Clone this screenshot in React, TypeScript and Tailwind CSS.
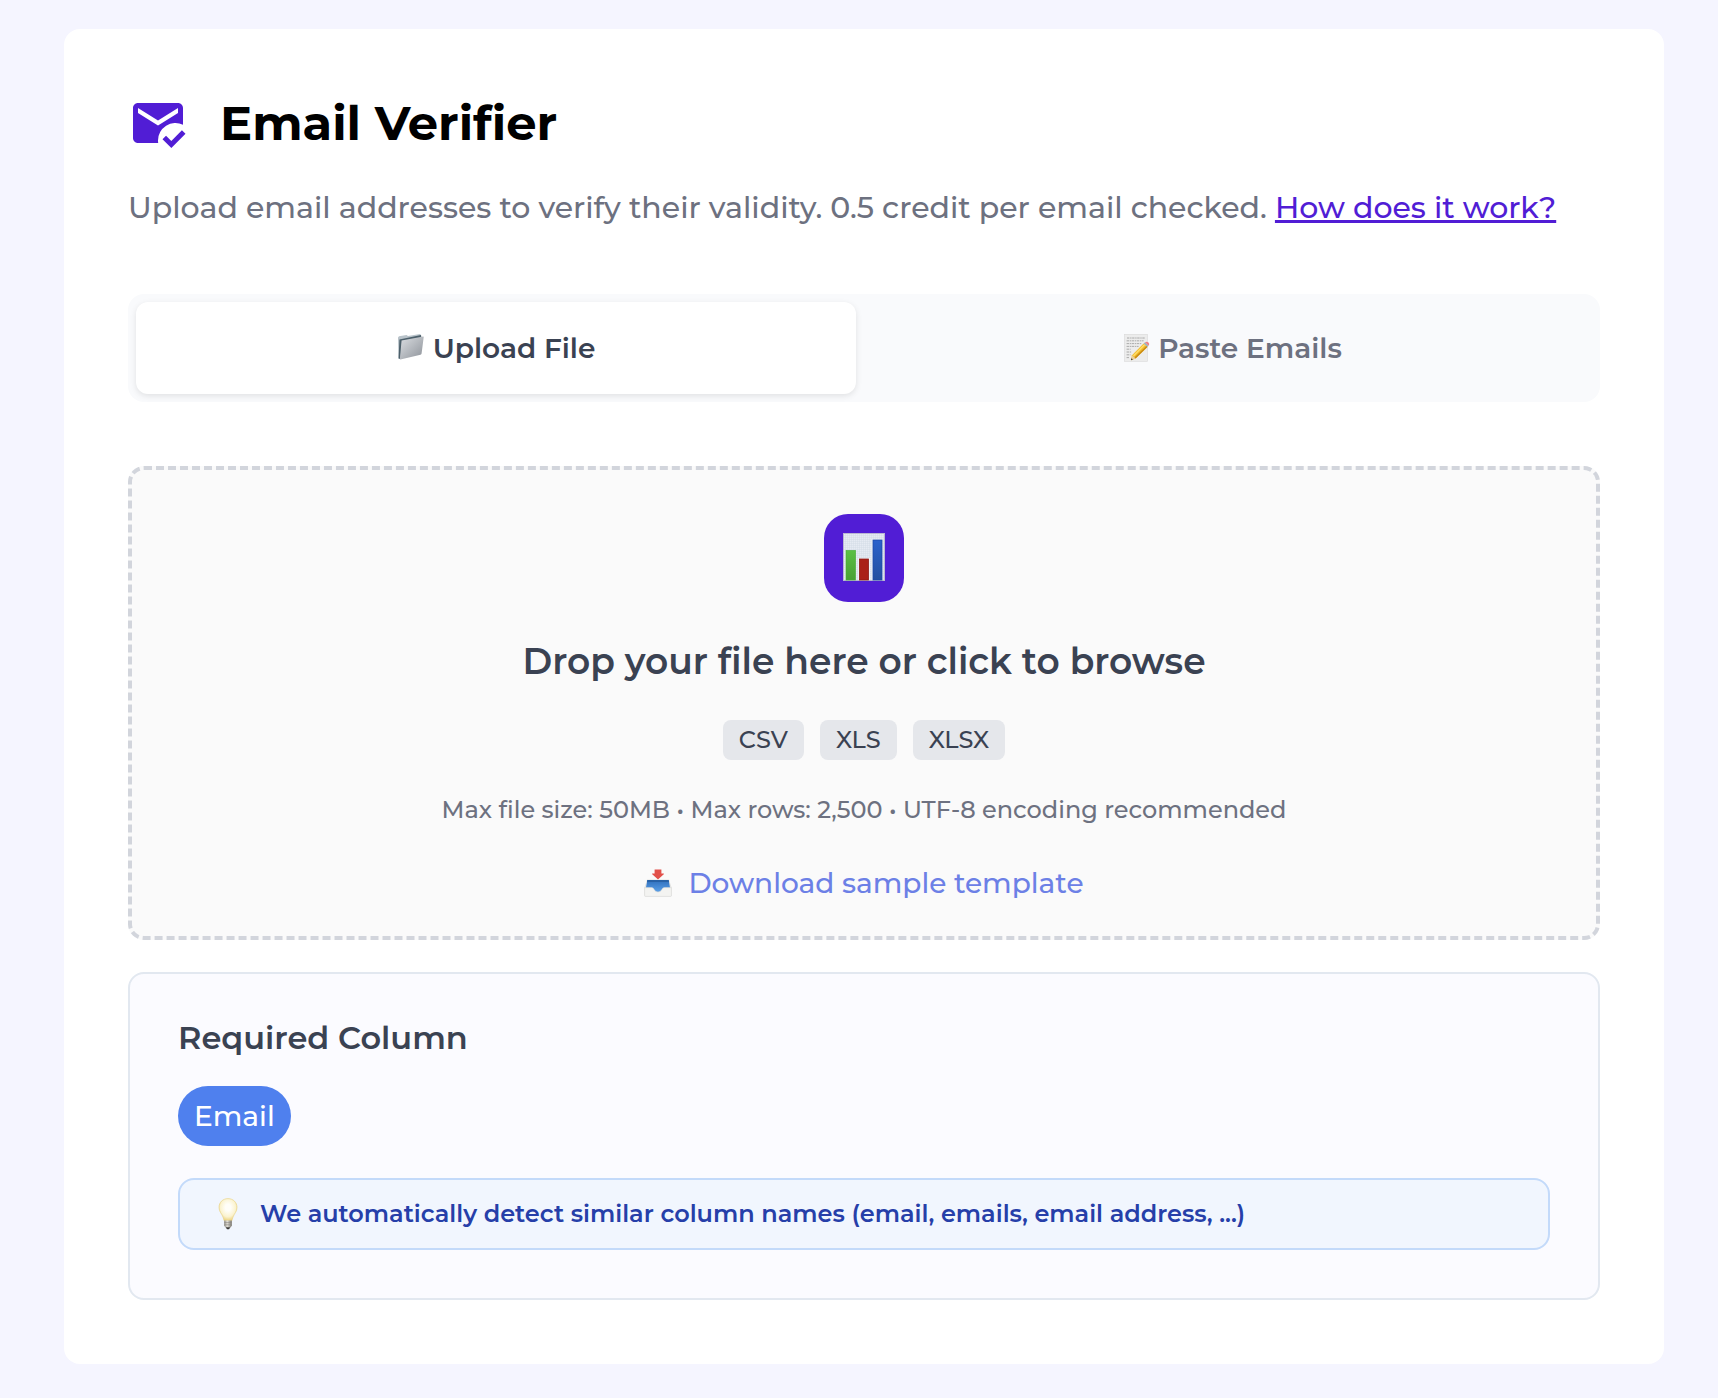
import React, { useState } from 'react';
import { MdMarkEmailRead } from 'react-icons/md';

type Mode = 'upload' | 'paste';

interface IconProps {
  className?: string;
}

const FILE_TYPES = ['CSV', 'XLS', 'XLSX'];

const FolderIcon: React.FC<IconProps> = ({ className }) => (
  <svg viewBox="0 0 28 28" className={className} aria-hidden="true">
    <defs>
      <linearGradient id="folderFront" x1="0" y1="0" x2="1" y2="1">
        <stop offset="0" stopColor="#dcdfe3" />
        <stop offset="1" stopColor="#8d9299" />
      </linearGradient>
    </defs>
    <path d="M1 3.4 L2 2.2 L9.500 1 L11 2 L23 0 L24 1 L24 4 L3.5 25 L1.4 24.6 Z" fill="#b9c3ca" />
    <path d="M2.4 5.6 L24 1 L24.4 3.4 L5 8 L3.4 25 L1.6 24.6 Z" fill="#4d606b" />
    <path d="M4.6 6.6 L26.2 2.4 Q26.8 2.4 26.7 3 L24.6 19.6 Q24.4 20.6 23.5 20.8 L3.4 25.4 Q2.8 25.5 2.9 24.8 Z" fill="url(#folderFront)" />
  </svg>
);

const MemoIcon: React.FC<IconProps> = ({ className }) => (
  <svg viewBox="0 0 28 28" className={className} aria-hidden="true">
    <rect x="2.5" y="0.3" width="23" height="27" fill="#ececec" stroke="#d9d9d9" strokeWidth="0.6" />
    <g stroke="#9b9b9b" strokeWidth="0.8" strokeDasharray="2.4 0.7 1.4 0.6">
      <path d="M5 4h18M4.600 6.800h17M4.600 9.600h15M4.600 12.400h12M4.600 15.200h4M4.600 18h5M4.600 20.800h4M4.600 23.600h3" />
    </g>
    <path d="M9 26.2 L10 21.2 L21.6 9.600 L25.4 13 L13.6 24.6 Z" fill="#f3bd2e" />
    <path d="M12.400 23.600 L24.600 11.800 L25.4 13 L13.6 24.6 Z" fill="#c98a14" />
    <path d="M11 21.400 L22.200 10.200 L23.200 11 L12 22.200 Z" fill="#ffdf70" />
    <path d="M9 26.2 L10 21.2 L13.6 24.6 Z" fill="#e9cfa0" />
    <path d="M9 26.2 L9.4 24.2 L10.9 25.5 Z" fill="#333333" />
    <path d="M21.6 9.6 L23 8.3 L26.6 11.7 L25.4 13 Z" fill="#9fb4bd" />
    <path d="M23 8.3 Q24.800 7 26.500 8.600 Q28 10.200 26.6 11.7 Z" fill="#ee7f86" />
  </svg>
);

const ChartIcon: React.FC<IconProps> = ({ className }) => (
  <svg viewBox="0 0 42 48" className={className} aria-hidden="true">
    <defs>
      <pattern id="chartGrid" width="2" height="2" patternUnits="userSpaceOnUse">
        <rect width="2" height="2" fill="#e6ebf3" />
        <path d="M0 0H2M0 0V2" stroke="#cfd9e5" strokeWidth="0.8" />
      </pattern>
      <linearGradient id="barGreen" x1="0" y1="0" x2="0" y2="1">
        <stop offset="0" stopColor="#5bc043" />
        <stop offset="1" stopColor="#49a035" />
      </linearGradient>
      <linearGradient id="barBlue" x1="0" y1="0" x2="0" y2="1">
        <stop offset="0" stopColor="#2b62cc" />
        <stop offset="1" stopColor="#234f9f" />
      </linearGradient>
    </defs>
    <rect x="0.5" y="0.5" width="41" height="47" fill="url(#chartGrid)" stroke="#b9b7d3" />
    <path d="M2 17h11v30H2zM15 25h12v22H15zM28.5 6h11v41h-11z" fill="#f1f4f8" />
    <rect x="3" y="17.5" width="9.5" height="29.5" fill="url(#barGreen)" stroke="#48ac38" strokeWidth="0.7" />
    <rect x="16.5" y="26" width="9" height="21" fill="#aa2118" stroke="#8f1a14" strokeWidth="0.8" />
    <rect x="30" y="7" width="9" height="40" fill="url(#barBlue)" stroke="#1c4aa8" strokeWidth="0.8" />
  </svg>
);

const InboxIcon: React.FC<IconProps> = ({ className }) => (
  <svg viewBox="0 0 28 28" className={className} aria-hidden="true">
    <defs>
      <linearGradient id="trayBlue" x1="0" y1="0" x2="0" y2="1">
        <stop offset="0" stopColor="#2f6fbd" />
        <stop offset="1" stopColor="#5ea3ea" />
      </linearGradient>
    </defs>
    <path d="M3 10.4h22l2.6 8v8q0 1.2-1.2 1.2H1.6q-1.2 0-1.2-1.2v-8z" fill="#e4e4e2" />
    <path d="M3.4 11h21.2l1.6 8.4q-6 0-7.4 2.6-1.4 2-4.8 2t-4.8-2q-1.4-2.6-7.4-2.6z" fill="url(#trayBlue)" />
    <path d="M3.4 11h21.2l.4 2H3z" fill="#2861a6" />
    <path d="M0.6 18.6h7q1.8 0 2.6 2 1 2.4 3.8 2.4t3.8-2.4q.8-2 2.6-2h7v7.6q0 1.2-1.2 1.2H1.8q-1.2 0-1.2-1.2z" fill="#f3f3f1" stroke="#d5d5d2" strokeWidth="0.5" />
    <path d="M10.6 0.6h6.8v4h2.2q.6.2.2.7L14.5 10q-.5.4-1 0L8.2 5.3q-.4-.5.2-.7h2.2z" fill="#e2504a" />
  </svg>
);

const BulbIcon: React.FC<IconProps> = ({ className }) => (
  <svg viewBox="0 0 20 32" className={className} aria-hidden="true">
    <defs>
      <radialGradient id="bulbGlow" cx="0.5" cy="0.4" r="0.6">
        <stop offset="0.25" stopColor="#fffef8" />
        <stop offset="0.7" stopColor="#fbf3cf" />
        <stop offset="1" stopColor="#ecd27c" />
      </radialGradient>
      <linearGradient id="bulbBase" x1="0" y1="0" x2="1" y2="0">
        <stop offset="0" stopColor="#8b8880" />
        <stop offset="0.4" stopColor="#e3e0d8" />
        <stop offset="1" stopColor="#77746d" />
      </linearGradient>
    </defs>
    <path d="M10 .6C4.8.6 1 4.5 1 9.4c0 4.2 2.6 6 4 9.6.6 1.6.8 3 1.2 3.8h7.6c.4-.8.6-2.2 1.2-3.8 1.4-3.6 4-5.4 4-9.6C19 4.5 15.2.6 10 .6z" fill="url(#bulbGlow)" stroke="#ead58d" strokeWidth="0.7" />
    <path d="M6.2 22.6h7.6v5.2l-1.4 1.6H7.6l-1.4-1.6z" fill="url(#bulbBase)" />
    <path d="M6.2 24.6h7.6M6.2 26.8h7.6" stroke="#8a877f" strokeWidth="0.6" />
    <path d="M7.6 29.2h4.8L11 31.2H9z" fill="#3c3a36" />
  </svg>
);

const TABS: { id: Mode; label: string; Icon: React.FC<IconProps> }[] = [
  { id: 'upload', label: 'Upload File', Icon: FolderIcon },
  { id: 'paste', label: 'Paste Emails', Icon: MemoIcon },
];

export default function App() {
  const [mode, setMode] = useState<Mode>('upload');

  return (
    <div className="min-h-screen bg-[#f5f5ff] pt-[29px] pr-[54px] pb-[34px] pl-16 font-[Montserrat,Inter,sans-serif] font-medium">
      <main className="rounded-2xl bg-white p-16">
        <header>
          <div className="flex items-center gap-8">
            <MdMarkEmailRead className="size-[60px] shrink-0 text-[#511dd5]" />
            <h1 className="text-[48px] leading-[60px] font-bold text-black">Email Verifier</h1>
          </div>
          <p className="mt-8 text-[30px] leading-[45px] text-[#6d7180]">
            Upload email addresses to verify their validity. 0.5 credit per email checked.{' '}
            <a href="#how" className="text-[#511dd5] underline decoration-[3px]">
              How does it work?
            </a>
          </p>
        </header>

        <div role="tablist" className="mt-16 grid grid-cols-2 gap-4 rounded-2xl bg-[#f9fafc] p-2">
          {TABS.map(({ id, label, Icon }) => (
            <button
              key={id}
              type="button"
              role="tab"
              aria-selected={mode === id}
              onClick={() => setMode(id)}
              className={`flex h-[92px] items-center justify-center gap-2 rounded-xl text-[28px] font-semibold ${
                mode === id ? 'bg-white text-[#3a4252] shadow-[0_2px_6px_rgba(0,0,0,0.1)]' : 'text-[#6d7180]'
              }`}
            >
              <Icon className="size-7" />
              {label}
            </button>
          ))}
        </div>

        <section className="relative mt-16 flex flex-col items-center rounded-2xl border-4 border-dashed border-[#d2d5dc] bg-[#fafafa] pt-11 pb-[30px]">
          <label htmlFor="email-file" className="flex cursor-pointer flex-col items-center">
            <span className="flex h-[88px] w-20 items-center justify-center rounded-3xl bg-[#511dd5] pb-0.5">
              <ChartIcon className="h-12 w-[42px]" />
            </span>
            <span className="mt-8 text-[36px] leading-[54px] font-semibold text-[#3a4252]">
              Drop your file here or click to browse
            </span>
          </label>
          <input id="email-file" type="file" accept=".csv,.xls,.xlsx" className="sr-only" />
          <ul className="mt-8 flex gap-4">
            {FILE_TYPES.map((type) => (
              <li key={type} className="rounded-lg bg-[#e5e7eb] px-4 text-[24px] leading-[40px] text-[#3a4252]">
                {type}
              </li>
            ))}
          </ul>
          <p className="mt-8 text-[24px] leading-[36px] text-[#6d7180]">
            Max file size: 50MB • Max rows: 2,500 • UTF-8 encoding recommended
          </p>
          <a href="#template" className="mt-8 flex items-center gap-4 text-[28px] leading-[46px] text-[#6c80e6]">
            <InboxIcon className="size-7" />
            Download sample template
          </a>
        </section>

        <section className="mt-8 rounded-2xl border-2 border-[#e2e8f0] bg-[#fbfbff] px-12 pt-10 pb-12">
          <h2 className="text-[32px] leading-[48px] font-semibold text-[#3a4252]">Required Column</h2>
          <span className="mt-6 inline-block rounded-full bg-[#4f80ee] px-4 align-top text-[28px] leading-[60px] text-white">
            Email
          </span>
          <div className="mt-8 flex h-[72px] items-center gap-[22px] rounded-2xl border-2 border-[#c3dafa] bg-[#f1f6fe] px-[38px] text-[24px] font-semibold text-[#263fa9]">
            <BulbIcon className="h-8 w-5" />
            <p>We automatically detect similar column names (email, emails, email address, ...)</p>
          </div>
        </section>
      </main>
    </div>
  );
}
